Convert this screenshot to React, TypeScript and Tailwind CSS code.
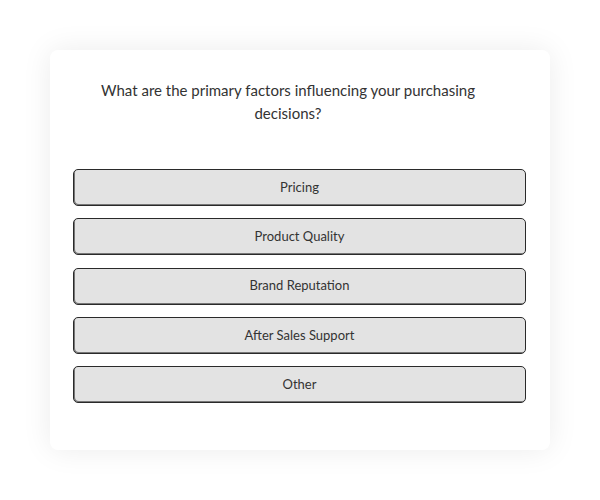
const options = ['Pricing', 'Product Quality', 'Brand Reputation', 'After Sales Support', 'Other']

export default function App() {
  return (
    <div
      className="flex h-[500px] w-[600px] items-start justify-center bg-white pt-[50px]"
      style={{ fontFamily: '"Lato", "Open Sans", sans-serif' }}
    >
      <div className="flex h-[400px] w-[500px] flex-col rounded-lg bg-white shadow-[0_0_30px_rgba(0,0,0,0.08)]">
        <div className="mt-[29px] ml-[38px] w-[400px] text-center text-[15px] leading-[23px] text-[#333]">
          What are the primary factors influencing your purchasing decisions?
        </div>

        <div className="mt-[44px] flex flex-col gap-[12.3px] px-[23px]">
          {options.map((option) => (
            <button
              key={option}
              className="h-[37px] w-[453px] rounded-[5px] border border-[#2a2a2a] bg-[#e3e3e3] text-[13px] text-[#333] shadow-[inset_1px_-1px_0_#777]"
            >
              {option}
            </button>
          ))}
        </div>
      </div>
    </div>
  )
}
